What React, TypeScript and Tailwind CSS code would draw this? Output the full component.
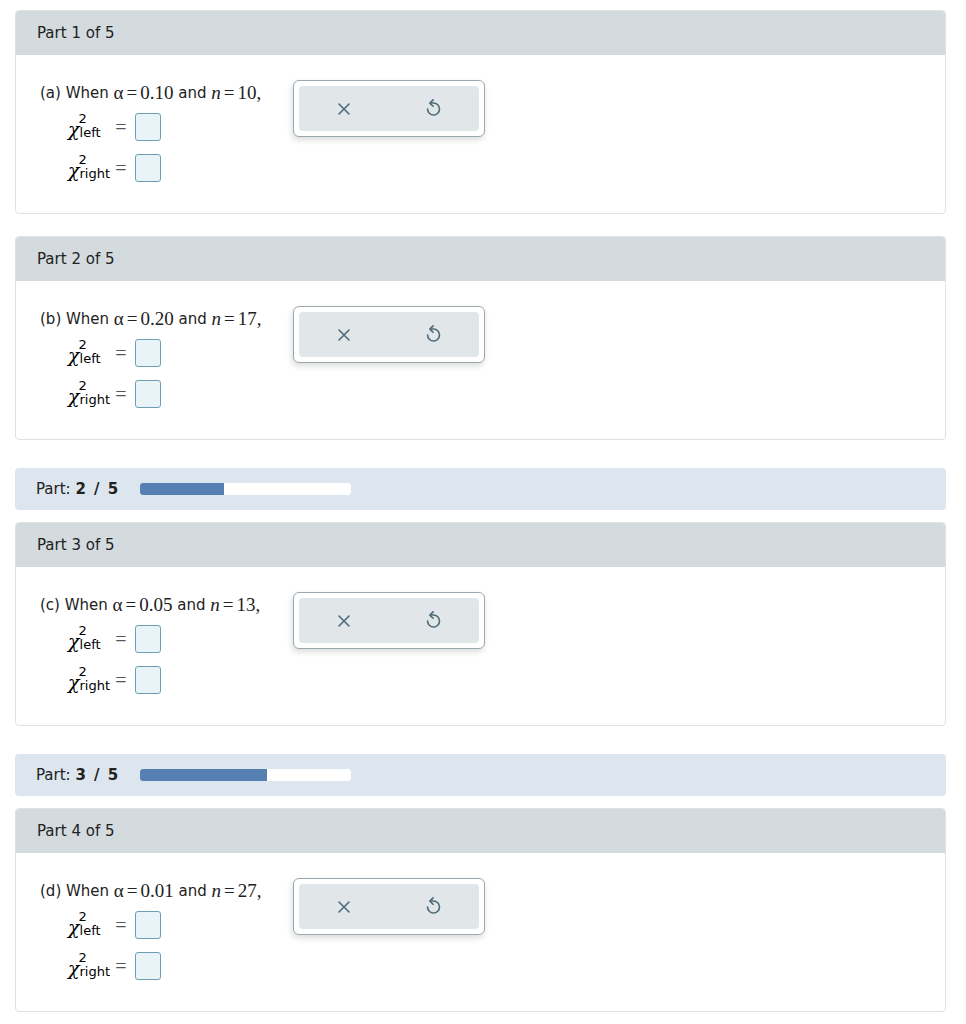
import React from "react";

const sans = "font-['Verdana','DejaVu_Sans',sans-serif]";
const serif = "font-['Liberation_Serif','Times_New_Roman',serif]";
const greek = "font-['DejaVu_Serif',serif]";

type Part = { num: number; letter: string; alpha: string; n: string };

const parts: Part[] = [
  { num: 1, letter: "a", alpha: "0.10", n: "10" },
  { num: 2, letter: "b", alpha: "0.20", n: "17" },
  { num: 3, letter: "c", alpha: "0.05", n: "13" },
  { num: 4, letter: "d", alpha: "0.01", n: "27" },
];

function XIcon() {
  return (
    <svg width="14" height="14" viewBox="0 0 14 14" fill="none" stroke="#4f6a78" strokeWidth="1.6" strokeLinecap="round">
      <path d="M2 2l10 10M12 2L2 12" />
    </svg>
  );
}

function UndoIcon() {
  return (
    <svg width="22" height="24" viewBox="0 0 24 26" fill="none" stroke="#4f6a78" strokeWidth="1.8" strokeLinecap="round" strokeLinejoin="round">
      <path d="M8.5 6.5h3a6.5 6.5 0 1 1-6.5 6.5" />
      <path d="M11 3L7.5 6.5L11 10" />
    </svg>
  );
}

function Chi({ sub }: { sub: string }) {
  return (
    <span className="inline-flex items-start h-[28px] whitespace-nowrap">
      <span className={`${greek} italic text-[19px] leading-none mt-[9px]`}>χ</span>
      <span className={`${sans} flex flex-col text-[13px] leading-[14px] mt-[1px]`}>
        <span className="ml-[-1px]">2</span>
        <span>{sub}</span>
      </span>
    </span>
  );
}

function AnswerRow({ sub }: { sub: string }) {
  return (
    <div className="flex items-center h-[28px]">
      <div className="w-[34px]">
        <Chi sub={sub} />
      </div>
      <span className={`${serif} w-[32px] pl-[6px] text-center text-[20px] text-[#555]`}>=</span>
      <span className="ml-[1px] w-[26px] h-[28px] rounded-[3px] border border-[#6c9fb3] bg-[#e9f4f9]" />
    </div>
  );
}

function PartCard({ part }: { part: Part }) {
  return (
    <div className="rounded-[4px] border border-[#dde2e5] bg-white overflow-hidden">
      <div className="h-[44px] bg-[#d4dbdf] flex items-center pl-[21px] text-[15px] text-[#222]">
        Part {part.num} of 5
      </div>
      <div className="flex items-start pl-[24px] pt-[25px] pb-[31px]">
        <div className="w-[253px]">
          <div className="mt-[2px] h-[22px] flex items-center text-[15px] text-[#222] whitespace-nowrap">
            ({part.letter}) When&nbsp;
            <span className={`${serif} text-[19px]`}>
              α<span className="mx-[3px]">=</span>
              {part.alpha}
            </span>
            &nbsp;and&nbsp;
            <span className={`${serif} text-[19px]`}>
              <i>n</i>
              <span className="mx-[3px]">=</span>
              {part.n},
            </span>
          </div>
          <div className="pl-[28px] mt-[9px] flex flex-col gap-[13px]">
            <AnswerRow sub="left" />
            <AnswerRow sub="right" />
          </div>
        </div>
        <div className="w-[192px] h-[57px] rounded-[6px] border border-[#9aa9b0] bg-white p-[5px] shadow-[-1px_3px_6px_rgba(0,0,0,0.14)]">
          <div className="h-full rounded-[4px] bg-[#e1e6e9] grid grid-cols-2">
            <div className="flex items-center justify-center">
              <XIcon />
            </div>
            <div className="flex items-center justify-center">
              <UndoIcon />
            </div>
          </div>
        </div>
      </div>
    </div>
  );
}

function Progress({ done }: { done: number }) {
  return (
    <div className="h-[42px] rounded-[4px] bg-[#dde6ee] flex items-center pl-[21px] text-[15px] text-[#222]">
      <span className="w-[104px] whitespace-nowrap">
        Part: <b className="tracking-[1.5px]">{done}&nbsp;/&nbsp;5</b>
      </span>
      <div className="w-[211px] h-[12px] rounded-[3px] bg-white overflow-hidden">
        <div className="h-full bg-[#5580b1]" style={{ width: `${(done / 5) * 100}%` }} />
      </div>
    </div>
  );
}

export default function App() {
  return (
    <div className={`${sans} bg-white min-h-screen pt-[10px] pl-[15px] w-[946px]`}>
      <PartCard part={parts[0]} />
      <div className="mt-[22px]">
        <PartCard part={parts[1]} />
      </div>
      <div className="mt-[28px]">
        <Progress done={2} />
      </div>
      <div className="mt-[12px]">
        <PartCard part={parts[2]} />
      </div>
      <div className="mt-[28px]">
        <Progress done={3} />
      </div>
      <div className="mt-[12px]">
        <PartCard part={parts[3]} />
      </div>
    </div>
  );
}
